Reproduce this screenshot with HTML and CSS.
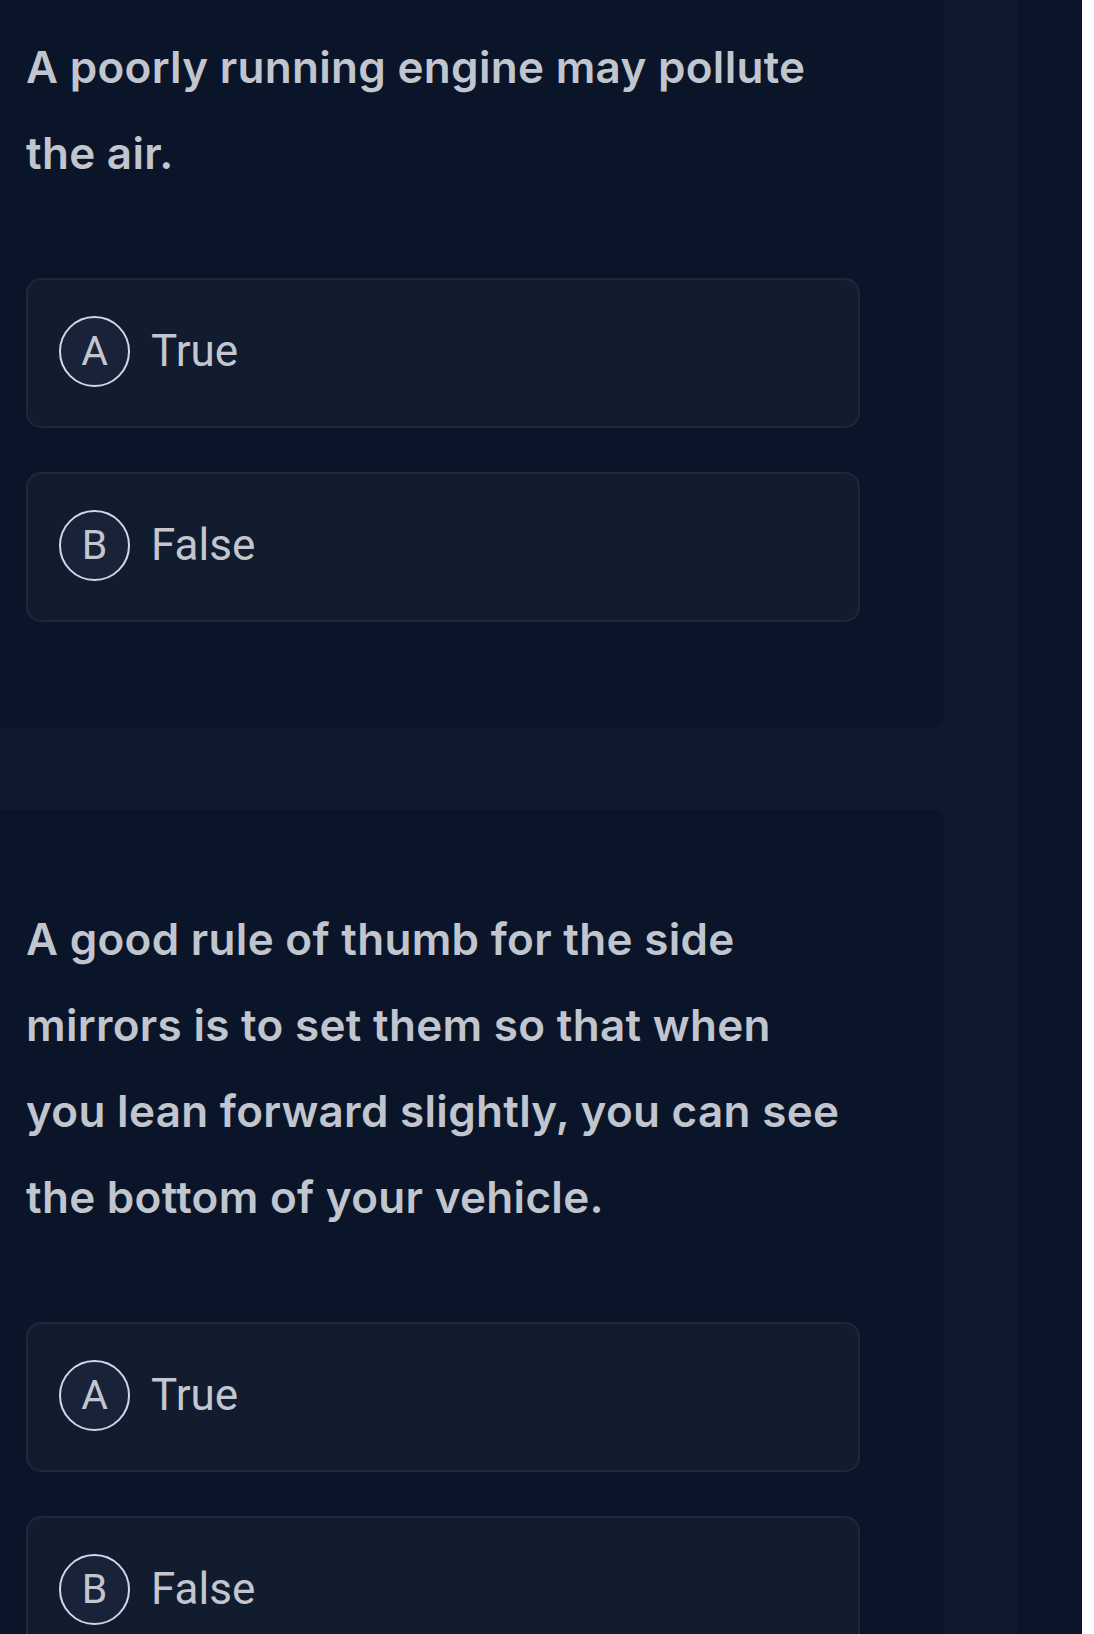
FILE: index.html
```html
<!DOCTYPE html>
<html lang="en">
<head>
<meta charset="utf-8">
<title>Quiz</title>
<link rel="stylesheet" href="styles.css">
</head>
<body>
<div class="app">
  <main class="feed">
    <section class="card card-first">
      <h2 class="question">A poorly running engine may pollute the air.</h2>
      <ul class="options">
        <li class="option"><span class="letter">A</span><span class="label">True</span></li>
        <li class="option"><span class="letter">B</span><span class="label">False</span></li>
      </ul>
    </section>
    <section class="card">
      <h2 class="question">A good rule of thumb for the side mirrors is to set them so that when you lean forward slightly, you can see the bottom of your vehicle.</h2>
      <ul class="options">
        <li class="option"><span class="letter">A</span><span class="label">True</span></li>
        <li class="option"><span class="letter">B</span><span class="label">False</span></li>
      </ul>
    </section>
  </main>
  <aside class="rail"></aside>
</div>
</body>
</html>
```

FILE: styles.css
```css
html, body {
  margin: 0;
  padding: 0;
  background: #ffffff;
}
body {
  font-family: Roboto, "Liberation Sans", Arial, sans-serif;
  overflow: hidden;
  height: 1634px;
}
.app {
  width: 1082px;
  height: 1634px;
  display: flex;
  overflow: hidden;
  background: #0b1529;
}
.feed {
  width: 1017px;
  background: #0f192e;
  display: flex;
  flex-direction: column;
  gap: 83px;
  margin-top: -62px;
}
.rail {
  flex: 1;
  background: #0b1529;
}
.card {
  width: 944px;
  box-sizing: border-box;
  background: #0b1529;
  border-radius: 0 10px 10px 0;
  padding: 87px 84px 105px 26px;
  flex-shrink: 0;
}
.question {
  margin: 0 20px 81px 0;
  font-family: Inter, Roboto, "Liberation Sans", Arial, sans-serif;
  font-size: 44px;
  line-height: 86px;
  font-weight: 600;
  color: #c1c5ce;
  letter-spacing: 0.3px;
  position: relative;
  top: -1px;
}
.options {
  list-style: none;
  margin: 0;
  padding: 0;
  display: flex;
  flex-direction: column;
  gap: 44px;
}
.option {
  height: 150px;
  box-sizing: border-box;
  border: 2px solid #1e283a;
  border-radius: 15px;
  background: #121c2f;
  display: flex;
  align-items: center;
  padding: 0 30px 4px 31px;
  gap: 21px;
}
.letter {
  width: 71px;
  height: 71px;
  box-sizing: border-box;
  border: 2.5px solid #d3d6e6;
  border-radius: 50%;
  background: #18233a;
  color: #c3c6cf;
  font-size: 41px;
  line-height: 66px;
  text-align: center;
  font-weight: 400;
  flex-shrink: 0;
}
.label {
  font-size: 44px;
  color: #c3c6cf;
  font-weight: 400;
  line-height: 1;
}
```
